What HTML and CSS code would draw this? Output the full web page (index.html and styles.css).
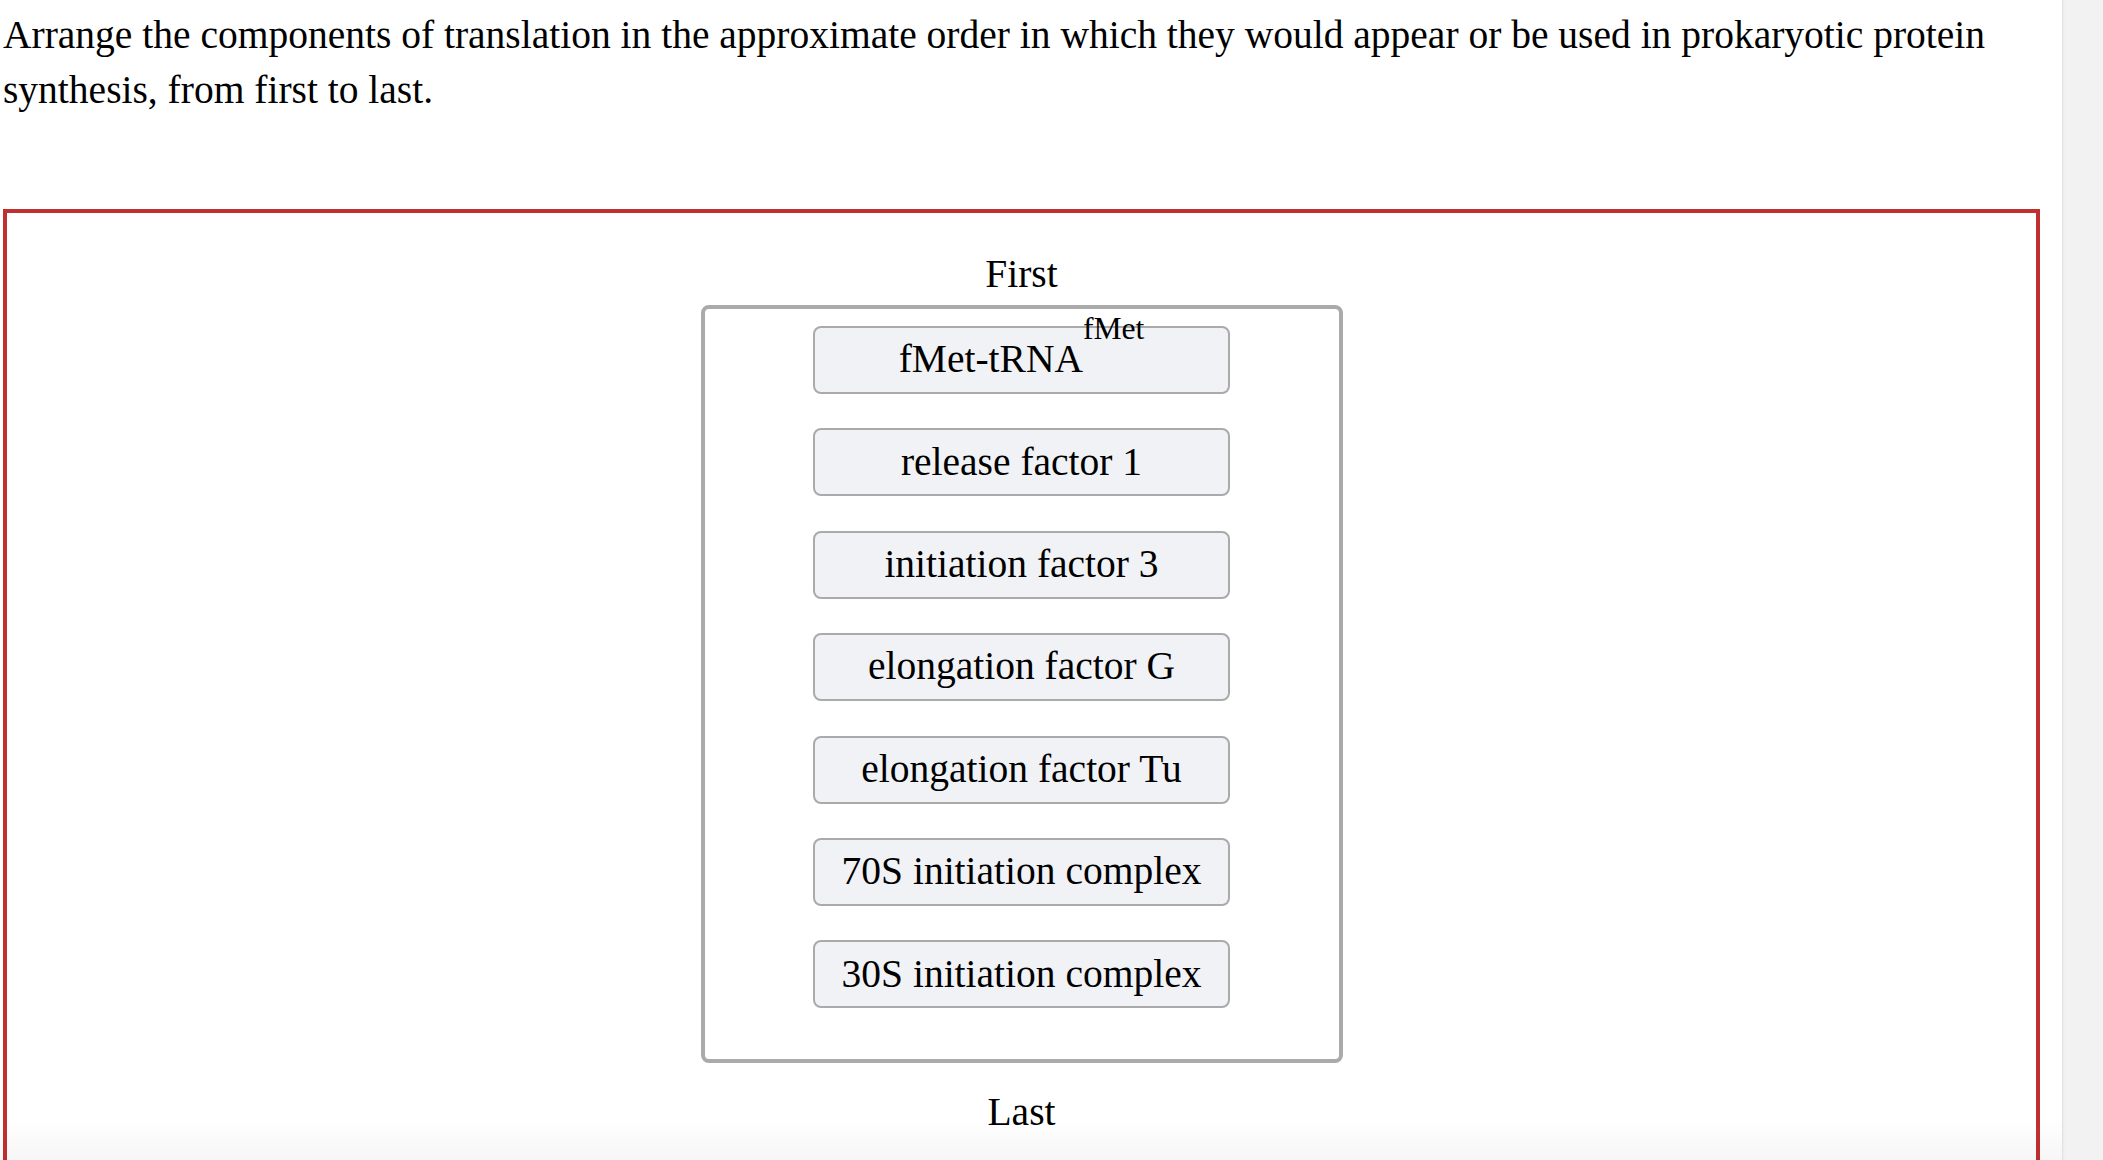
FILE: index.html
```html
<!DOCTYPE html>
<html lang="en">
<head>
    <meta charset="UTF-8">
    <meta name="viewport" content="width=device-width, initial-scale=1.0">
    <title>Ranking: Prokaryotic Translation</title>
    <link rel="stylesheet" href="styles.css">
</head>
<body>
    <div class="page">
        <main class="content">
            <p class="prompt">Arrange the components of translation in the approximate order in which they would appear or be used in prokaryotic protein synthesis, from first to last.</p>

            <div class="answer_area">
                <div class="rank_label">First</div>
                <ol class="rank_list">
                    <li class="rank_item">fMet-tRNA<sup>fMet</sup></li>
                    <li class="rank_item">release factor 1</li>
                    <li class="rank_item">initiation factor 3</li>
                    <li class="rank_item">elongation factor G</li>
                    <li class="rank_item">elongation factor Tu</li>
                    <li class="rank_item">70S initiation complex</li>
                    <li class="rank_item">30S initiation complex</li>
                </ol>
                <div class="rank_label">Last</div>
            </div>
        </main>
        <aside class="side_rail"></aside>
    </div>
</body>
</html>
```

FILE: styles.css
```css
* {
    padding: 0;
    margin: 0;
    box-sizing: border-box;
}
body {
    height: 100vh;
    overflow: hidden;
    background: #fff;
    color: #000;
    font-family: "Liberation Serif", "Times New Roman", serif;
}
.page {
    display: flex;
    height: 100%;
}
.content {
    flex: 1;
    position: relative;
    padding: 8px 22px 0 3px;
}
/* soft haze along the bottom edge of the view */
.content::after {
    content: "";
    position: absolute;
    left: 0;
    right: 0;
    bottom: 0;
    height: 42px;
    background: linear-gradient(to bottom, rgba(0, 0, 0, 0), rgba(0, 0, 0, 0.035));
    pointer-events: none;
}
.side_rail {
    width: 41px;
    background: #f2f2f2;
    box-shadow: inset 1px 0 0 #e2e2e2, inset 3px 0 3px -2px rgba(0, 0, 0, 0.06);
}
.prompt {
    font-size: 39.5px;
    line-height: 55px;
}
.answer_area {
    margin-top: 91px;
    border: 4px solid #c13030;
    padding: 33px 0 40px;
    display: flex;
    flex-direction: column;
    align-items: center;
}
.rank_label {
    font-size: 39.5px;
    line-height: 56px;
}
.rank_list {
    list-style: none;
    width: 642px;
    margin: 3px 0 21px;
    padding: 17px 0 16px;
    border: 4px solid #aaa;
    border-radius: 8px;
    display: flex;
    flex-direction: column;
    align-items: center;
}
.rank_item {
    width: 417px;
    height: 68px;
    margin-bottom: 34.4px;
    display: flex;
    align-items: center;
    justify-content: center;
    background: #f1f2f6;
    border: 2px solid #aaa;
    border-radius: 8px;
    font-size: 39.5px;
    line-height: 1;
    white-space: nowrap;
}
.rank_item sup {
    font-size: 0.8em;
    line-height: 0;
    vertical-align: baseline;
    position: relative;
    top: -31px;
}
```
